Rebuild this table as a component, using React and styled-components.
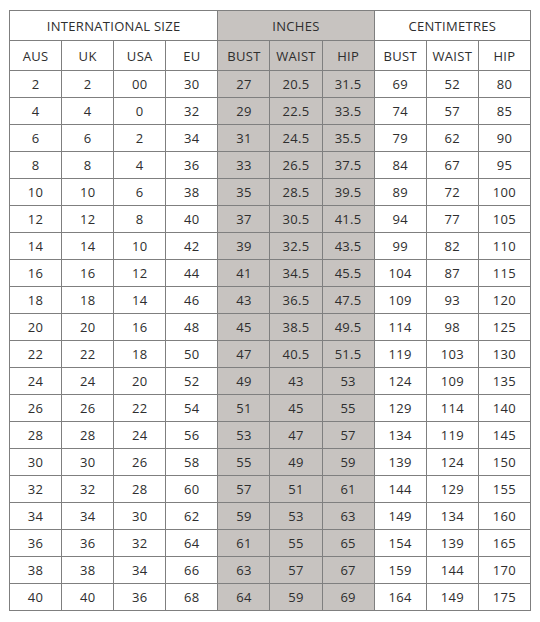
import React from "react";
import styled, { createGlobalStyle } from "styled-components";

const GlobalStyle = createGlobalStyle`
  body {
    margin: 0;
    background: #ffffff;
  }
`;

const Page = styled.div`
  padding: 10px 9px;
`;

const Table = styled.table`
  width: 522px;
  table-layout: fixed;
  border-collapse: collapse;
  font-family: "Open Sans", "Liberation Sans", sans-serif;
  font-size: 13px;
  color: #2e2e2e;
`;

const Cell = styled.td`
  border: 1.5px solid #7f7f7f;
  text-align: center;
  padding: 0;
  height: ${props => (props.$head ? "29px" : "26px")};
  background: ${props => (props.$shade ? "#c7c3c0" : "#ffffff")};
  letter-spacing: 0.3px;
`;

const rows = [
  [2, 2, "00", 30, 27, 20.5, 31.5, 69, 52, 80],
  [4, 4, 0, 32, 29, 22.5, 33.5, 74, 57, 85],
  [6, 6, 2, 34, 31, 24.5, 35.5, 79, 62, 90],
  [8, 8, 4, 36, 33, 26.5, 37.5, 84, 67, 95],
  [10, 10, 6, 38, 35, 28.5, 39.5, 89, 72, 100],
  [12, 12, 8, 40, 37, 30.5, 41.5, 94, 77, 105],
  [14, 14, 10, 42, 39, 32.5, 43.5, 99, 82, 110],
  [16, 16, 12, 44, 41, 34.5, 45.5, 104, 87, 115],
  [18, 18, 14, 46, 43, 36.5, 47.5, 109, 93, 120],
  [20, 20, 16, 48, 45, 38.5, 49.5, 114, 98, 125],
  [22, 22, 18, 50, 47, 40.5, 51.5, 119, 103, 130],
  [24, 24, 20, 52, 49, 43, 53, 124, 109, 135],
  [26, 26, 22, 54, 51, 45, 55, 129, 114, 140],
  [28, 28, 24, 56, 53, 47, 57, 134, 119, 145],
  [30, 30, 26, 58, 55, 49, 59, 139, 124, 150],
  [32, 32, 28, 60, 57, 51, 61, 144, 129, 155],
  [34, 34, 30, 62, 59, 53, 63, 149, 134, 160],
  [36, 36, 32, 64, 61, 55, 65, 154, 139, 165],
  [38, 38, 34, 66, 63, 57, 67, 159, 144, 170],
  [40, 40, 36, 68, 64, 59, 69, 164, 149, 175],
];

const subHeads = ["AUS", "UK", "USA", "EU", "BUST", "WAIST", "HIP", "BUST", "WAIST", "HIP"];

// columns 4..6 are the inches group, shaded grey
const isShaded = i => i >= 4 && i <= 6;

export default function App() {
  return (
    <Page>
      <GlobalStyle />
      <Table>
        <tbody>
          <tr>
            <Cell $head colSpan={4}>INTERNATIONAL SIZE</Cell>
            <Cell $head $shade colSpan={3}>INCHES</Cell>
            <Cell $head colSpan={3}>CENTIMETRES</Cell>
          </tr>
          <tr>
            {subHeads.map((h, i) => (
              <Cell $head $shade={isShaded(i)} key={i}>{h}</Cell>
            ))}
          </tr>
          {rows.map((r, ri) => (
            <tr key={ri}>
              {r.map((v, i) => (
                <Cell $shade={isShaded(i)} key={i}>{v}</Cell>
              ))}
            </tr>
          ))}
        </tbody>
      </Table>
    </Page>
  );
}
